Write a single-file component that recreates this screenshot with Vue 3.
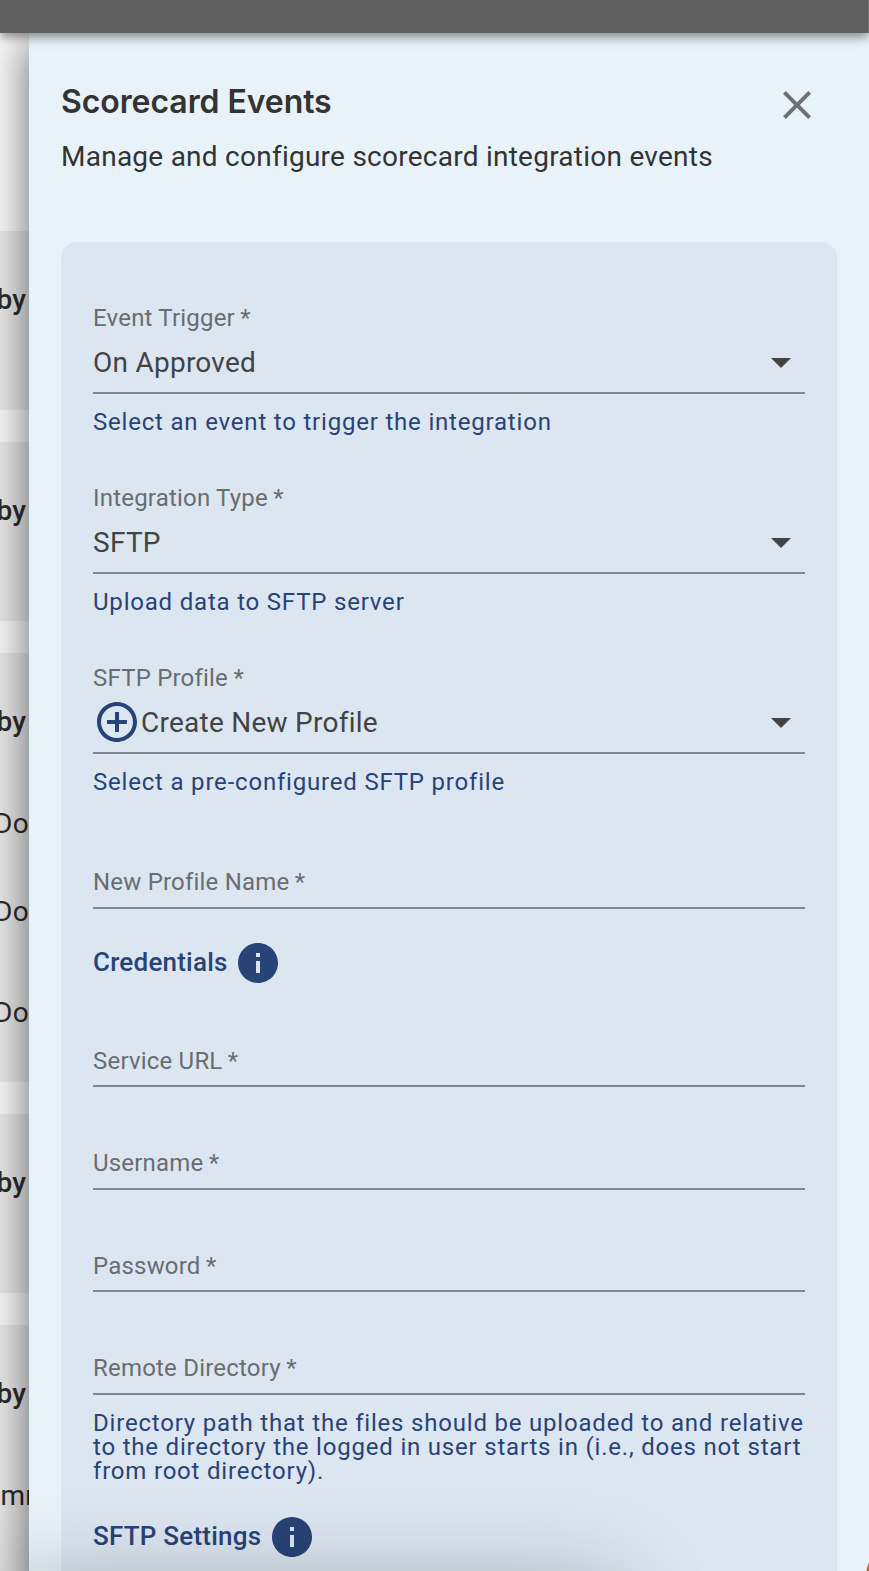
<template>
  <div class="page">
    <header class="topbar"></header>
    <div class="body">
      <aside class="behind">
        <div v-for="(block, i) in blocks" :key="i" class="behind__card" :class="`behind__card--${block.size}`">
          <span v-for="(row, j) in block.rows" :key="j" class="behind__text" :class="`behind__text--${row.kind}`">{{ row.text }}</span>
        </div>
      </aside>

      <main class="drawer">
        <div class="drawer__header">
          <div>
            <h1 class="drawer__title">Scorecard Events</h1>
            <p class="drawer__subtitle">Manage and configure scorecard integration events</p>
          </div>
          <button class="drawer__close" aria-label="Close">
            <svg viewBox="0 0 24 24" width="48" height="48">
              <path fill="currentColor" d="M19 6.41 17.59 5 12 10.59 6.41 5 5 6.41 10.59 12 5 17.59 6.41 19 12 13.41 17.59 19 19 17.59 13.41 12z" />
            </svg>
          </button>
        </div>

        <section class="card">
          <div v-for="field in selects" :key="field.label" class="select">
            <label class="label">{{ field.label }} <span class="star">*</span></label>
            <div class="select__control">
              <svg v-if="field.icon" class="select__icon" viewBox="0 0 24 24" width="48" height="48">
                <path fill="currentColor" d="M13 7h-2v4H7v2h4v4h2v-4h4v-2h-4V7zm-1-5C6.48 2 2 6.48 2 12s4.48 10 10 10 10-4.48 10-10S17.52 2 12 2zm0 18c-4.41 0-8-3.59-8-8s3.59-8 8-8 8 3.59 8 8-3.59 8-8 8z" />
              </svg>
              <span class="select__value">{{ field.value }}</span>
              <span class="select__arrow"></span>
            </div>
            <p class="hint">{{ field.hint }}</p>
          </div>

          <div class="input input--name">
            <label class="label">New Profile Name <span class="star">*</span></label>
          </div>

          <div class="section">
            <h2 class="section__title">Credentials</h2>
            <svg class="section__info" viewBox="0 0 24 24" width="48" height="48">
              <path fill="currentColor" d="M12 2C6.48 2 2 6.48 2 12s4.48 10 10 10 10-4.48 10-10S17.52 2 12 2zm1 15h-2v-6h2v6zm0-8h-2V7h2v2z" />
            </svg>
          </div>

          <div v-for="name in inputs" :key="name" class="input">
            <label class="label">{{ name }} <span class="star">*</span></label>
          </div>
          <p class="hint">
            Directory path that the files should be uploaded to and relative to the directory the logged in user starts in (i.e., does not start from root directory).
          </p>

          <div class="section">
            <h2 class="section__title">SFTP Settings</h2>
            <svg class="section__info" viewBox="0 0 24 24" width="48" height="48">
              <path fill="currentColor" d="M12 2C6.48 2 2 6.48 2 12s4.48 10 10 10 10-4.48 10-10S17.52 2 12 2zm1 15h-2v-6h2v6zm0-8h-2V7h2v2z" />
            </svg>
          </div>
        </section>
      </main>
    </div>
    <div class="dock-shadow"></div>
    <div class="fab"></div>
  </div>
</template>

<script setup>
const selects = [
  { label: 'Event Trigger', value: 'On Approved', hint: 'Select an event to trigger the integration' },
  { label: 'Integration Type', value: 'SFTP', hint: 'Upload data to SFTP server' },
  { label: 'SFTP Profile', value: 'Create New Profile', hint: 'Select a pre-configured SFTP profile', icon: true },
]

const inputs = ['Service URL', 'Username', 'Password', 'Remote Directory']

const by = { text: 'by', kind: 'by' }

// visible strip of the list under the drawer
const blocks = [
  { size: 'small', rows: [by] },
  { size: 'small', rows: [by] },
  {
    size: 'large',
    rows: [by, { text: 'Do', kind: 'first' }, { text: 'Do', kind: 'second' }, { text: 'Do', kind: 'third' }],
  },
  { size: 'small', rows: [by] },
  { size: 'last', rows: [by, { text: 'mm', kind: 'comment' }] },
]
</script>

<style>
body {
  margin: 0;
  overflow: hidden;
}
</style>

<style scoped>
.page {
  position: relative;
  width: 869px;
  height: 1571px;
  overflow: hidden;
  display: flex;
  flex-direction: column;
  font-family: Roboto, "Liberation Sans", sans-serif;
  background: #f9f9f9;
}

.topbar {
  position: relative;
  z-index: 3;
  flex: none;
  box-sizing: border-box;
  height: 33px;
  background: #606060;
  border-right: 1px solid #757575;
  box-shadow: 0 4px 10px -1px rgba(0, 0, 0, 0.36), 0 8px 12px -1px rgba(0, 0, 0, 0.13);
}

.body {
  flex: 1;
  display: flex;
  min-height: 0;
}

.behind {
  width: 29px;
  flex: none;
  box-sizing: border-box;
  padding-top: 198px;
  display: flex;
  flex-direction: column;
  gap: 32px;
  overflow: hidden;
}

.behind__card {
  flex: none;
  box-sizing: border-box;
  padding-top: 53px;
  display: flex;
  flex-direction: column;
  background: #e9e9e9;
}

.behind__card--small {
  height: 179px;
}

.behind__card--large {
  height: 429px;
}

.behind__card--last {
  height: 260px;
}

.behind__text {
  font-size: 28px;
  line-height: 32px;
  letter-spacing: 0.25px;
  color: #2c2c2c;
  white-space: nowrap;
}

.behind__text--by {
  margin-left: -3.5px;
  font-weight: 500;
}

.behind__text--first {
  margin: 70px 0 0 -6px;
}

.behind__text--second {
  margin: 56px 0 0 -6px;
}

.behind__text--third {
  margin: 69px 0 0 -6px;
}

.behind__text--comment {
  margin: 70px 0 0 0.5px;
}

.drawer {
  position: relative;
  z-index: 2;
  flex: 1;
  box-sizing: border-box;
  padding: 0 32px;
  background: #e7f3f9;
  box-shadow: 0 16px 36px 6px rgba(0, 0, 0, 0.47);
}

.drawer__header {
  display: flex;
  justify-content: space-between;
  height: 209px;
}

.drawer__title {
  margin: 49px 0 0;
  font-family: Inter, Roboto, sans-serif;
  font-size: 32px;
  line-height: 40px;
  font-weight: 600;
  letter-spacing: -0.08px;
  color: #333;
}

.drawer__subtitle {
  margin: 19px 0 0;
  font-size: 28px;
  line-height: 32px;
  letter-spacing: 0.25px;
  color: #333;
  white-space: nowrap;
}

.drawer__close {
  margin: 48px 16px 0 0;
  padding: 0;
  width: 48px;
  height: 48px;
  border: 0;
  background: none;
  color: #6d7173;
}

svg {
  display: block;
  flex: none;
}

.card {
  box-sizing: border-box;
  height: 1400px;
  padding: 62px 32px 0;
  border-radius: 16px;
  background: #dce6f0;
}

.label {
  display: block;
  font-size: 24px;
  line-height: 28px;
  letter-spacing: 0.2px;
  color: #686d70;
}

.star {
  margin-left: -0.8px;
}

.select {
  height: 180px;
}

.select__control {
  height: 60px;
  display: flex;
  align-items: center;
  border-bottom: 2px solid #80868c;
}

.select__icon {
  color: #284377;
}

.select__value {
  padding-top: 2px;
  font-size: 28px;
  line-height: 32px;
  letter-spacing: 0.25px;
  color: #434343;
}

.select__arrow {
  margin: 2px 14px 0 auto;
  border: 10px solid transparent;
  border-top-color: #434343;
  border-bottom: 0;
}

.hint {
  margin: 16px 0 0;
  font-size: 24px;
  line-height: 24px;
  letter-spacing: 0.8px;
  color: #284377;
}

.input {
  box-sizing: border-box;
  height: 102.6px;
  padding-top: 62.3px;
  border-bottom: 2px solid #80868c;
}

.input--name {
  height: 65px;
  padding-top: 24px;
}

.section {
  display: flex;
  align-items: center;
  gap: 6.4px;
  height: 48px;
  margin: 30px 0 -2.6px;
  color: #284377;
}

.section__title {
  margin: 0 0 2px;
  font-size: 26px;
  line-height: 32px;
  font-weight: 500;
  letter-spacing: 0.22px;
}

/* shadow of the bar docked just below the fold */
.dock-shadow {
  position: absolute;
  z-index: 4;
  left: 0;
  top: 1585px;
  width: 620px;
  height: 200px;
  box-shadow: 0 0 90px rgba(0, 0, 0, 0.27);
}

.fab {
  position: absolute;
  z-index: 4;
  left: 865px;
  top: 1524px;
  width: 120px;
  height: 120px;
  border-radius: 50%;
  background: #ad5a35;
}
</style>
